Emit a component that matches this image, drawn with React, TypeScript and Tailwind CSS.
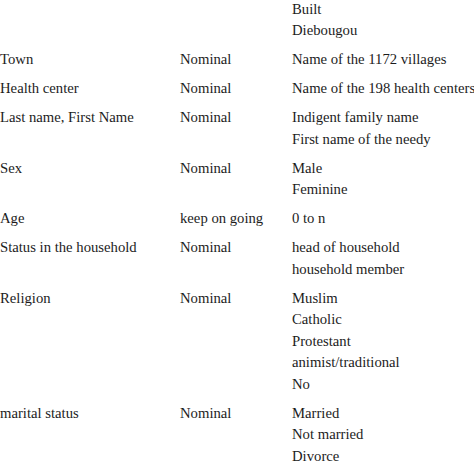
import React from 'react';

const rows: { name: string; type: string; values: string[] }[] = [
  { name: '', type: '', values: ['Built', 'Diebougou'] },
  { name: 'Town', type: 'Nominal', values: ['Name of the 1172 villages'] },
  { name: 'Health center', type: 'Nominal', values: ['Name of the 198 health centers'] },
  { name: 'Last name, First Name', type: 'Nominal', values: ['Indigent family name', 'First name of the needy'] },
  { name: 'Sex', type: 'Nominal', values: ['Male', 'Feminine'] },
  { name: 'Age', type: 'keep on going', values: ['0 to n'] },
  { name: 'Status in the household', type: 'Nominal', values: ['head of household', 'household member'] },
  { name: 'Religion', type: 'Nominal', values: ['Muslim', 'Catholic', 'Protestant', 'animist/traditional', 'No'] },
  { name: 'marital status', type: 'Nominal', values: ['Married', 'Not married', 'Divorce'] },
];

const App: React.FC = () => {
  return (
    <div className="w-[474px] h-[474px] overflow-hidden bg-white">
      <div
        className="-mt-[5px] text-[14.7px] leading-[21.5px] text-[#1c1c1c]"
        style={{ fontFamily: '"Liberation Serif", "DejaVu Serif", serif' }}
      >
        {rows.map((row, i) => (
          <div key={i} className="grid grid-cols-[180px_112px_1fr] py-[3.75px]">
            <div className="whitespace-nowrap">{row.name}</div>
            <div className="whitespace-nowrap">{row.type}</div>
            <div className="flex flex-col">
              {row.values.map((v) => (
                <span key={v} className="whitespace-nowrap">{v}</span>
              ))}
            </div>
          </div>
        ))}
      </div>
    </div>
  );
};

export default App;
